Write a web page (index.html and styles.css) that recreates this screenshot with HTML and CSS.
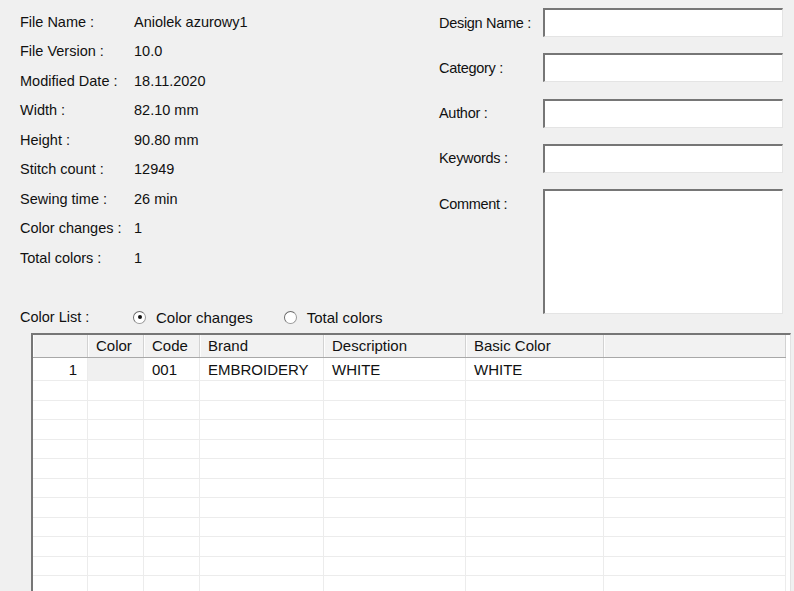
FILE: index.html
```html
<!DOCTYPE html>
<html>
<head>
<meta charset="utf-8">
<link rel="stylesheet" href="styles.css">
</head>
<body>
<div class="top">
  <div class="info">
    <div class="irow"><span class="lbl">File Name :</span><span>Aniolek azurowy1</span></div>
    <div class="irow"><span class="lbl">File Version :</span><span>10.0</span></div>
    <div class="irow"><span class="lbl">Modified Date :</span><span>18.11.2020</span></div>
    <div class="irow"><span class="lbl">Width :</span><span>82.10 mm</span></div>
    <div class="irow"><span class="lbl">Height :</span><span>90.80 mm</span></div>
    <div class="irow"><span class="lbl">Stitch count :</span><span>12949</span></div>
    <div class="irow"><span class="lbl">Sewing time :</span><span>26 min</span></div>
    <div class="irow"><span class="lbl">Color changes :</span><span>1</span></div>
    <div class="irow"><span class="lbl">Total colors :</span><span>1</span></div>
  </div>
  <div class="form">
    <div class="frow"><span class="flbl">Design Name :</span><div class="box"></div></div>
    <div class="frow"><span class="flbl">Category :</span><div class="box"></div></div>
    <div class="frow"><span class="flbl">Author :</span><div class="box"></div></div>
    <div class="frow"><span class="flbl">Keywords :</span><div class="box"></div></div>
    <div class="frow comment"><span class="flbl">Comment :</span><div class="box big"></div></div>
  </div>
</div>
<div class="clist">
  <span class="cl-lbl">Color List :</span>
  <span class="radio on"></span><span class="rlbl">Color changes</span>
  <span class="radio"></span><span class="rlbl">Total colors</span>
</div>
<div class="grid">
  <div class="hdr">
    <div class="c c0"></div>
    <div class="c c1">Color</div>
    <div class="c c2">Code</div>
    <div class="c c3">Brand</div>
    <div class="c c4">Description</div>
    <div class="c c5">Basic Color</div>
    <div class="c c6"></div>
  </div>
  <div class="row first">
    <div class="c c0 num">1</div>
    <div class="c c1 swatch"></div>
    <div class="c c2">001</div>
    <div class="c c3">EMBROIDERY</div>
    <div class="c c4">WHITE</div>
    <div class="c c5">WHITE</div>
    <div class="c c6"></div>
  </div>
  <div class="row"><div class="c c0"></div><div class="c c1"></div><div class="c c2"></div><div class="c c3"></div><div class="c c4"></div><div class="c c5"></div><div class="c c6"></div></div>
  <div class="row"><div class="c c0"></div><div class="c c1"></div><div class="c c2"></div><div class="c c3"></div><div class="c c4"></div><div class="c c5"></div><div class="c c6"></div></div>
  <div class="row"><div class="c c0"></div><div class="c c1"></div><div class="c c2"></div><div class="c c3"></div><div class="c c4"></div><div class="c c5"></div><div class="c c6"></div></div>
  <div class="row"><div class="c c0"></div><div class="c c1"></div><div class="c c2"></div><div class="c c3"></div><div class="c c4"></div><div class="c c5"></div><div class="c c6"></div></div>
  <div class="row"><div class="c c0"></div><div class="c c1"></div><div class="c c2"></div><div class="c c3"></div><div class="c c4"></div><div class="c c5"></div><div class="c c6"></div></div>
  <div class="row"><div class="c c0"></div><div class="c c1"></div><div class="c c2"></div><div class="c c3"></div><div class="c c4"></div><div class="c c5"></div><div class="c c6"></div></div>
  <div class="row"><div class="c c0"></div><div class="c c1"></div><div class="c c2"></div><div class="c c3"></div><div class="c c4"></div><div class="c c5"></div><div class="c c6"></div></div>
  <div class="row"><div class="c c0"></div><div class="c c1"></div><div class="c c2"></div><div class="c c3"></div><div class="c c4"></div><div class="c c5"></div><div class="c c6"></div></div>
  <div class="row"><div class="c c0"></div><div class="c c1"></div><div class="c c2"></div><div class="c c3"></div><div class="c c4"></div><div class="c c5"></div><div class="c c6"></div></div>
  <div class="row"><div class="c c0"></div><div class="c c1"></div><div class="c c2"></div><div class="c c3"></div><div class="c c4"></div><div class="c c5"></div><div class="c c6"></div></div>
  <div class="row"><div class="c c0"></div><div class="c c1"></div><div class="c c2"></div><div class="c c3"></div><div class="c c4"></div><div class="c c5"></div><div class="c c6"></div></div>
</div>
</body>
</html>
```

FILE: styles.css
```css
html, body {
  margin: 0;
  padding: 0;
  background: #f0f0f0;
  overflow: hidden;
}
body {
  width: 794px;
  height: 591px;
  font-family: "Liberation Sans", Arial, sans-serif;
  font-size: 14.5px;
  color: #111;
}
.top {
  display: flex;
  height: 306px;
}
.info {
  width: 439px;
  flex: none;
  padding: 7px 0 0 20px;
  box-sizing: border-box;
}
.irow {
  display: flex;
  align-items: center;
  height: 29.5px;
}
.lbl {
  width: 114px;
  flex: none;
}
.form {
  padding-top: 8px;
  display: flex;
  flex-direction: column;
  gap: 16.3px;
}
.frow {
  display: flex;
  align-items: center;
}
.frow.comment {
  align-items: flex-start;
}
.flbl {
  width: 104px;
  flex: none;
  letter-spacing: -0.3px;
}
.comment .flbl {
  padding-top: 7px;
}
.box {
  width: 240px;
  height: 29px;
  box-sizing: border-box;
  background: #fff;
  border-top: 2px solid #767676;
  border-left: 2px solid #767676;
  border-right: 1px solid #e4e4e4;
  border-bottom: 1px solid #e4e4e4;
}
.box.big {
  height: 125px;
}
.clist {
  display: flex;
  align-items: center;
  height: 22px;
  padding-left: 20px;
}
.cl-lbl {
  width: 113px;
}
.radio {
  width: 13px;
  height: 13px;
  box-sizing: border-box;
  border-radius: 50%;
  background: #fff;
  border: 1px solid #9a9a9a;
  border-top-color: #6a6a6a;
  border-left-color: #6a6a6a;
  position: relative;
  flex: none;
}
.radio.on::after {
  content: "";
  position: absolute;
  left: 3.5px;
  top: 3.5px;
  width: 4px;
  height: 4px;
  border-radius: 50%;
  background: #111;
}
.rlbl {
  margin-left: 10px;
  margin-right: 31px;
  font-size: 15px;
}
.grid {
  margin: 5px 0 0 31px;
  width: 760px;
  height: 260px;
  box-sizing: border-box;
  border-top: 2px solid #767676;
  border-left: 2px solid #767676;
  border-right: 1px solid #e2e2e2;
  background: #fff;
  font-size: 15px;
  overflow: hidden;
}
.hdr, .row {
  display: flex;
  width: 753px;
}
.hdr {
  height: 23px;
  background: #f2f2f2;
  border-bottom: 1px solid #a8a8a8;
  box-sizing: border-box;
}
.hdr .c {
  border-right: 1px solid #d2d2d2;
  box-shadow: inset 1px 0 0 #fdfdfd;
  line-height: 22px;
}
.c {
  flex: none;
  box-sizing: border-box;
  padding-left: 8px;
  white-space: nowrap;
}
.row .c {
  border-right: 1px solid #ececec;
  border-bottom: 1px solid #ececec;
}
.row {
  height: 19.5px;
}
.row.first {
  height: 23px;
}
.row.first .c {
  line-height: 23px;
}
.c0 { width: 55px; }
.c1 { width: 56px; }
.c2 { width: 56px; }
.c3 { width: 124px; }
.c4 { width: 142px; }
.c5 { width: 138px; }
.c6 { width: 182px; }
.num {
  text-align: right;
  padding: 0 10px 0 0;
}
.swatch {
  background: #f0f0f0;
}
```
